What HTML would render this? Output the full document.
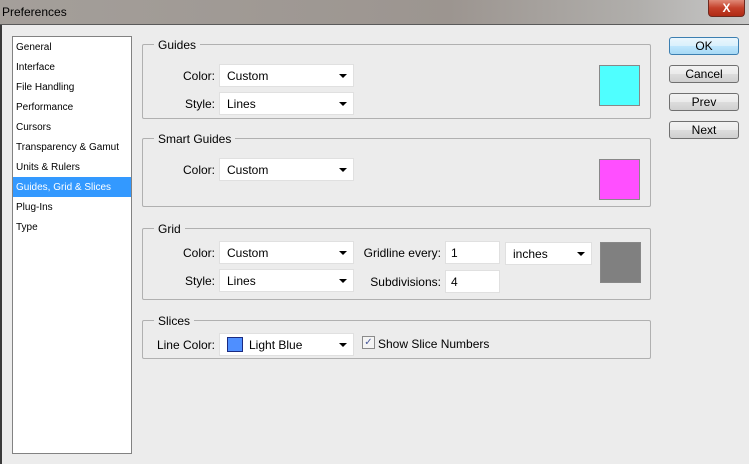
<!DOCTYPE html>
<html><head><style>
*{box-sizing:border-box;margin:0;padding:0}
body{width:749px;height:464px;background:#ececec;font-family:"Liberation Sans",Tahoma,sans-serif;font-size:12px;color:#000;position:relative;overflow:hidden}
.abs{position:absolute}
.title{left:0;top:0;width:749px;height:25px;background:linear-gradient(90deg,#a49f9a,#9c9590 60%,#b0aeab 85%,#c8c8c8);border-bottom:1px solid #5a5a5a}
.title span{position:absolute;left:2px;top:5px;font-size:12px}
.close{left:708px;top:0;width:37px;height:17px;background:linear-gradient(#e08a78,#c4402a 50%,#b02a15);border:1px solid #6e2a20;border-top:none;border-radius:0 0 4px 4px;color:#fff;font-weight:bold;text-align:center;font-size:12px;line-height:16px}
.lb{left:0;top:25px;width:2px;height:439px;background:#3a3a3a}
.list{left:12px;top:36px;width:120px;height:418px;background:#fff;border:1px solid #828282}
.list div{height:20px;line-height:21px;padding-left:3px;font-size:10px}
.list .sel{background:#3399ff;color:#fff}
.grp{border:1px solid #b0b0b0;border-radius:2px}
.gl{background:#ececec;padding:0 4px;font-size:12px}
.sel2,.inp{background:#fff;border:1px solid #e0e0e0;height:23px;line-height:23px;padding-left:7px;font-size:12px}
.sel2:after{content:"";position:absolute;right:6px;top:9px;border-left:4px solid transparent;border-right:4px solid transparent;border-top:4px solid #000}
.lbl{text-align:right;font-size:12px}
.sw{border:1px solid #888}
.btn{left:669px;width:70px;height:18px;border:1px solid #707070;border-radius:3px;background:linear-gradient(#f2f2f2,#ebebeb 50%,#dddddd 51%,#cfcfcf);text-align:center;line-height:17px;font-size:12px}
</style></head><body>
<div class="abs title"><span>Preferences</span></div>
<div class="abs close">X</div>
<div class="abs lb"></div>
<div class="abs list">
<div>General</div><div>Interface</div><div>File Handling</div><div>Performance</div><div>Cursors</div><div>Transparency &amp; Gamut</div><div>Units &amp; Rulers</div><div class="sel">Guides, Grid &amp; Slices</div><div>Plug-Ins</div><div>Type</div>
</div>

<div class="abs grp" style="left:142px;top:44px;width:509px;height:75px"></div>
<div class="abs gl" style="left:154px;top:38px">Guides</div>
<div class="abs lbl" style="left:150px;top:69px;width:65px">Color:</div>
<div class="abs sel2" style="left:219px;top:64px;width:135px">Custom</div>
<div class="abs lbl" style="left:150px;top:97px;width:65px">Style:</div>
<div class="abs sel2" style="left:219px;top:92px;width:135px">Lines</div>
<div class="abs sw" style="left:599px;top:65px;width:41px;height:41px;background:#4fffff"></div>

<div class="abs grp" style="left:142px;top:138px;width:509px;height:69px"></div>
<div class="abs gl" style="left:154px;top:132px">Smart Guides</div>
<div class="abs lbl" style="left:150px;top:163px;width:65px">Color:</div>
<div class="abs sel2" style="left:219px;top:158px;width:135px">Custom</div>
<div class="abs sw" style="left:599px;top:159px;width:41px;height:41px;background:#ff4fff"></div>

<div class="abs grp" style="left:142px;top:228px;width:509px;height:72px"></div>
<div class="abs gl" style="left:154px;top:222px">Grid</div>
<div class="abs lbl" style="left:150px;top:246px;width:65px">Color:</div>
<div class="abs sel2" style="left:219px;top:241px;width:135px">Custom</div>
<div class="abs lbl" style="left:150px;top:274px;width:65px">Style:</div>
<div class="abs sel2" style="left:219px;top:269px;width:135px">Lines</div>
<div class="abs lbl" style="left:340px;top:246px;width:101px">Gridline every:</div>
<div class="abs inp" style="left:445px;top:241px;width:55px;padding-left:5px">1</div>
<div class="abs sel2" style="left:505px;top:242px;width:87px">inches</div>
<div class="abs lbl" style="left:340px;top:275px;width:101px">Subdivisions:</div>
<div class="abs inp" style="left:445px;top:270px;width:55px;padding-left:5px">4</div>
<div class="abs sw" style="left:600px;top:242px;width:41px;height:41px;background:#808080"></div>

<div class="abs grp" style="left:142px;top:320px;width:509px;height:39px"></div>
<div class="abs gl" style="left:154px;top:314px">Slices</div>
<div class="abs lbl" style="left:150px;top:338px;width:65px">Line Color:</div>
<div class="abs sel2" style="left:219px;top:333px;width:135px;padding-left:29px">Light Blue</div>
<div class="abs" style="left:227px;top:337px;width:16px;height:15px;background:#4f8fff;border:1px solid #1a2a80"></div>
<div class="abs" style="left:362px;top:336px;width:13px;height:13px;border:1px solid #8a8a8a;background:#f4f4f4;font-size:10px;line-height:11px;text-align:center;color:#4a5a9a">✓</div>
<div class="abs" style="left:378px;top:337px">Show Slice Numbers</div>

<div class="abs btn" style="top:37px;border-color:#3c7fb1;background:linear-gradient(#eaf6fd,#d9f0fc 50%,#bee6fd 51%,#a7d9f5)">OK</div>
<div class="abs btn" style="top:65px">Cancel</div>
<div class="abs btn" style="top:93px">Prev</div>
<div class="abs btn" style="top:121px">Next</div>
</body></html>
